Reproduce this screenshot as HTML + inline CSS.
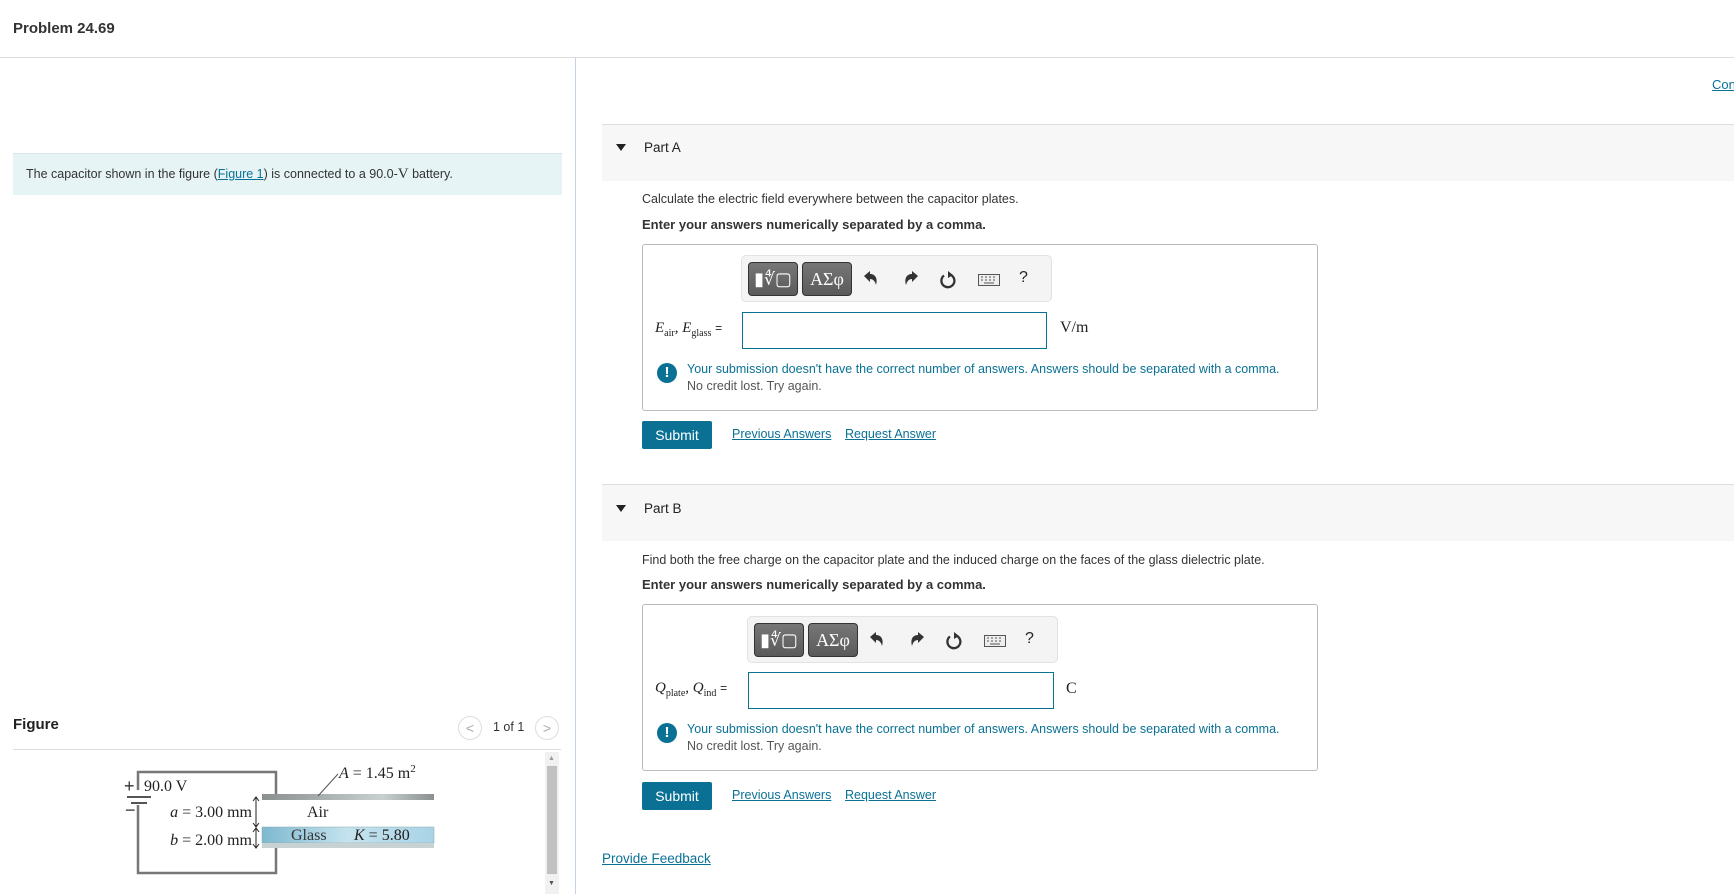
<!DOCTYPE html>
<html><head><meta charset="utf-8"><style>
*{margin:0;padding:0;box-sizing:border-box}
body{width:1734px;height:894px;position:relative;overflow:hidden;background:#fff;font-family:"Liberation Sans",Arial,sans-serif;color:#333;font-size:13px}
.a{position:absolute;white-space:nowrap}
a,.lnk{color:#0a7195;text-decoration:underline}
.ser{font-family:"Liberation Serif",serif}
.hdr{position:absolute;left:602px;right:0;background:#f7f7f7;border-top:1px solid #ddd}
.tri{position:absolute;width:0;height:0;border-left:5px solid transparent;border-right:5px solid transparent;border-top:7px solid #222}
.box{position:absolute;left:642px;width:676px;border:1px solid #bbb;border-radius:3px}
.tb{position:absolute;width:311px;height:47px;background:#f4f4f4;border:1px solid #e2e2e2;border-radius:5px}
.btn{position:absolute;top:6px;width:50px;height:34px;background:linear-gradient(#777,#5a5a5a);border:1px solid #333;border-radius:4px;color:#fff;font-family:"Liberation Serif",serif;font-size:18px;text-align:center;line-height:32px}
.inp{position:absolute;height:37px;border:1px solid #0a7195;background:#fff}
.sub{position:absolute;left:642px;width:70px;height:28px;background:#0a7195;color:#fff;font-size:14px;text-align:center;line-height:28px;border-radius:2px}
.fb{color:#0a7195;font-size:12.5px;line-height:17px}
.fb span{color:#555}
.ic{position:absolute;width:20px;height:20px;border-radius:50%;background:#0a7195;color:#fff;font-weight:bold;font-size:15px;text-align:center;line-height:20px}
.ico{position:absolute;top:14px}
</style></head><body>
<div class="a" style="left:13px;top:20px;font-size:15px;font-weight:bold;color:#333">Problem 24.69</div>
<div class="a" style="left:0;right:0;top:57px;height:1px;background:#ddd"></div>
<div class="a" style="left:575px;top:58px;width:1px;height:836px;background:#c5d3e3"></div>
<a class="a" style="left:1712px;top:77px;font-size:13px">Con</a>

<div class="a" style="left:13px;top:153px;width:549px;height:42px;background:#e6f4f5;border-top:1px solid #d9e6e8"></div>
<div class="a" style="left:26px;top:166px;font-size:12.5px">The capacitor shown in the figure (<a>Figure 1</a>) is connected to a 90.0-<span class="ser" style="font-size:15px">V</span> battery.</div>

<div class="a" style="left:13px;top:716px;font-size:15px;font-weight:bold;color:#222">Figure</div>
<div class="a" style="left:13px;top:749px;width:548px;height:1px;background:#ddd"></div>
<div class="a" style="left:458px;top:716px;width:24px;height:24px;border:1px solid #ddd;border-radius:50%;color:#aaa;text-align:center;line-height:22px;font-size:14px">&lt;</div>
<div class="a" style="left:493px;top:720px;font-size:12.5px">1 of 1</div>
<div class="a" style="left:535px;top:716px;width:24px;height:24px;border:1px solid #ddd;border-radius:50%;color:#aaa;text-align:center;line-height:22px;font-size:14px">&gt;</div>
<div class="a" style="left:545px;top:752px;width:14px;height:142px;background:#f1f1f1"></div>
<div class="a" style="left:547px;top:766px;width:10px;height:108px;background:#c1c1c1"></div>
<div class="a" style="left:548px;top:755px;font-size:7px;color:#999">▲</div>
<div class="a" style="left:548px;top:880px;font-size:7px;color:#555">▼</div>

<svg class="a" style="left:0;top:750px" width="545" height="144" viewBox="0 750 545 144">
<defs><linearGradient id="gl" x1="0" x2="1"><stop offset="0" stop-color="#7fb8cf"/><stop offset=".5" stop-color="#c5e3ef"/><stop offset="1" stop-color="#a9d3e6"/></linearGradient>
<linearGradient id="pl" x1="0" x2="1"><stop offset="0" stop-color="#8a8f8f"/><stop offset=".7" stop-color="#c8d0d0"/><stop offset="1" stop-color="#8a8f8f"/></linearGradient></defs>
<path d="M138 790 V772 H276 V795 M276 848 V873 H138 V805" fill="none" stroke="#777" stroke-width="2.5"/>
<line x1="127" y1="797" x2="151" y2="797" stroke="#555" stroke-width="2"/>
<line x1="131" y1="803" x2="147" y2="803" stroke="#555" stroke-width="2"/>
<text x="124" y="792" font-family="Liberation Sans" font-size="18" fill="#333">+</text>
<text x="125" y="816" font-family="Liberation Sans" font-size="18" fill="#333">−</text>
<text x="144" y="791" font-family="Liberation Serif" font-size="16" fill="#222">90.0 V</text>
<rect x="262" y="794" width="172" height="6" fill="url(#pl)"/>
<rect x="262" y="827" width="172" height="16" fill="url(#gl)" stroke="#8aa" stroke-width=".5"/>
<rect x="262" y="843" width="172" height="5" fill="#c9d2d2"/>
<line x1="318" y1="796" x2="338" y2="774" stroke="#555" stroke-width="1"/>
<text x="339" y="778" font-family="Liberation Serif" font-size="16" fill="#222"><tspan font-style="italic">A</tspan> = 1.45 m<tspan dy="-6" font-size="11">2</tspan></text>
<text x="252" y="817" text-anchor="end" font-family="Liberation Serif" font-size="16" fill="#222"><tspan font-style="italic">a</tspan> = 3.00 mm</text>
<text x="252" y="845" text-anchor="end" font-family="Liberation Serif" font-size="16" fill="#222"><tspan font-style="italic">b</tspan> = 2.00 mm</text>
<path d="M256 798 V826 M253 801 L256 797 L259 801 M253 823 L256 827 L259 823 M256 829 V847 M253 832 L256 828 L259 832 M253 844 L256 848 L259 844" stroke="#222" fill="none" stroke-width="1"/>
<text x="307" y="817" font-family="Liberation Serif" font-size="16" fill="#222">Air</text>
<text x="291" y="840" font-family="Liberation Serif" font-size="16" fill="#333">Glass</text>
<text x="354" y="840" font-family="Liberation Serif" font-size="16" fill="#222"><tspan font-style="italic">K</tspan> = 5.80</text>
</svg>

<!-- Part A -->
<div class="hdr" style="top:124px;height:57px"></div>
<div class="tri" style="left:616px;top:144px"></div>
<div class="a" style="left:644px;top:140px;font-size:13.5px;color:#222">Part A</div>
<div class="a" style="left:642px;top:192px;font-size:12.5px">Calculate the electric field everywhere between the capacitor plates.</div>
<div class="a" style="left:642px;top:217px;font-size:13px;font-weight:bold">Enter your answers numerically separated by a comma.</div>
<div class="box" style="top:244px;height:167px"></div>
<div class="tb" style="left:741px;top:255px">
 <div class="btn" style="left:6px">▮<span style="font-size:17px">∜</span>▢</div>
 <div class="btn" style="left:60px">ΑΣφ</div>
 <svg class="ico" style="left:121px" width="16" height="18" viewBox="0 0 16 18"><path d="M1 6 L7 1 V4 C12 4 15 8 13 15 C12 11 10 9 7 9 V12 Z" fill="#333"/></svg>
 <svg class="ico" style="left:161px" width="16" height="18" viewBox="0 0 16 18"><path d="M15 6 L9 1 V4 C4 4 1 8 3 15 C4 11 6 9 9 9 V12 Z" fill="#333"/></svg>
 <svg class="ico" style="left:197px" width="18" height="20" viewBox="0 0 18 20"><path d="M12 5 A6.5 6.5 0 1 1 5 5.5" fill="none" stroke="#333" stroke-width="2.3"/><path d="M9 1 L14 5 L9 8 Z" fill="#333"/></svg>
 <svg class="ico" style="left:236px;top:18px" width="22" height="12" viewBox="0 0 22 12"><rect x=".5" y=".5" width="21" height="11" fill="#eee" stroke="#555"/><path d="M3 3h2M7 3h2M11 3h2M15 3h2M3 6h2M7 6h2M11 6h2M15 6h2M6 9h10" stroke="#555"/></svg>
 <div class="a" style="left:277px;top:13px;font-size:16px;color:#222">?</div>
</div>
<div class="a ser" style="left:655px;top:320px;font-size:15px;color:#222"><i>E</i><sub style="font-size:10px">air</sub>, <i>E</i><sub style="font-size:10px">glass</sub> <span style="font-family:'Liberation Sans';font-size:12px">=</span></div>
<div class="inp" style="left:742px;top:312px;width:305px"></div>
<div class="a ser" style="left:1060px;top:319px;font-size:16px;color:#222">V/m</div>
<div class="ic" style="left:657px;top:363px">!</div>
<div class="a fb" style="left:687px;top:361px">Your submission doesn't have the correct number of answers. Answers should be separated with a comma.<br><span>No credit lost. Try again.</span></div>
<div class="sub" style="top:421px">Submit</div>
<a class="a" style="left:732px;top:427px;font-size:12.5px">Previous Answers</a>
<a class="a" style="left:845px;top:427px;font-size:12.5px">Request Answer</a>

<!-- Part B -->
<div class="hdr" style="top:484px;height:57px"></div>
<div class="tri" style="left:616px;top:505px"></div>
<div class="a" style="left:644px;top:501px;font-size:13.5px;color:#222">Part B</div>
<div class="a" style="left:642px;top:553px;font-size:12.5px">Find both the free charge on the capacitor plate and the induced charge on the faces of the glass dielectric plate.</div>
<div class="a" style="left:642px;top:577px;font-size:13px;font-weight:bold">Enter your answers numerically separated by a comma.</div>
<div class="box" style="top:604px;height:167px"></div>
<div class="tb" style="left:747px;top:616px">
 <div class="btn" style="left:6px">▮<span style="font-size:17px">∜</span>▢</div>
 <div class="btn" style="left:60px">ΑΣφ</div>
 <svg class="ico" style="left:121px" width="16" height="18" viewBox="0 0 16 18"><path d="M1 6 L7 1 V4 C12 4 15 8 13 15 C12 11 10 9 7 9 V12 Z" fill="#333"/></svg>
 <svg class="ico" style="left:161px" width="16" height="18" viewBox="0 0 16 18"><path d="M15 6 L9 1 V4 C4 4 1 8 3 15 C4 11 6 9 9 9 V12 Z" fill="#333"/></svg>
 <svg class="ico" style="left:197px" width="18" height="20" viewBox="0 0 18 20"><path d="M12 5 A6.5 6.5 0 1 1 5 5.5" fill="none" stroke="#333" stroke-width="2.3"/><path d="M9 1 L14 5 L9 8 Z" fill="#333"/></svg>
 <svg class="ico" style="left:236px;top:18px" width="22" height="12" viewBox="0 0 22 12"><rect x=".5" y=".5" width="21" height="11" fill="#eee" stroke="#555"/><path d="M3 3h2M7 3h2M11 3h2M15 3h2M3 6h2M7 6h2M11 6h2M15 6h2M6 9h10" stroke="#555"/></svg>
 <div class="a" style="left:277px;top:13px;font-size:16px;color:#222">?</div>
</div>
<div class="a ser" style="left:655px;top:680px;font-size:15px;color:#222"><i>Q</i><sub style="font-size:10px">plate</sub>, <i>Q</i><sub style="font-size:10px">ind</sub> <span style="font-family:'Liberation Sans';font-size:12px">=</span></div>
<div class="inp" style="left:748px;top:672px;width:306px"></div>
<div class="a ser" style="left:1066px;top:680px;font-size:16px;color:#222">C</div>
<div class="ic" style="left:657px;top:723px">!</div>
<div class="a fb" style="left:687px;top:721px">Your submission doesn't have the correct number of answers. Answers should be separated with a comma.<br><span>No credit lost. Try again.</span></div>
<div class="sub" style="top:782px">Submit</div>
<a class="a" style="left:732px;top:788px;font-size:12.5px">Previous Answers</a>
<a class="a" style="left:845px;top:788px;font-size:12.5px">Request Answer</a>

<a class="a" style="left:602px;top:851px;font-size:13.5px">Provide Feedback</a>
</body></html>
